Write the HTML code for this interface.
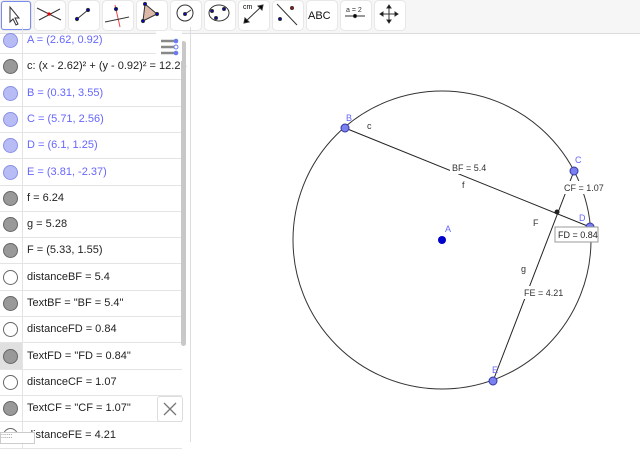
<!DOCTYPE html><html><head><style>
body{margin:0;width:640px;height:442px;overflow:hidden;background:#fff;font-family:"Liberation Sans",sans-serif;position:relative}
.tb{position:absolute;left:0;top:0;width:640px;height:33px;background:#f6f6f6;border-bottom:1px solid #ddd}
.tool{position:absolute;top:1px;width:30px;height:29px;background:#fff;border-radius:3px;box-shadow:0 0 1px #999}
.alg{position:absolute;left:0;top:27px;width:190px;height:415px;border-right:1px solid #ddd}
.row{position:absolute;left:0;width:182px;height:26px;border-bottom:1px solid #e4e4e4;font-size:11px;line-height:26px}
.row .ic{position:absolute;left:0;top:0;width:22px;height:26px;border-right:1px solid #e4e4e4}
.row .d{position:absolute;left:3px;top:6px;width:13px;height:13px;border-radius:50%;border:1px solid #666;background:#999}
.row .t{position:absolute;left:27px;white-space:nowrap;color:#222}
.blue .t{color:#66f}.blue .d{background:#b8bcf5;border-color:#8a90e8}
.w .d{background:#fff}
</style></head><body>
<div class="tb">
<div class="tool" style="left:1px;border:1px solid #7b8cf0;width:28px;height:27px"></div>
<div class="tool" style="left:35px"></div><div class="tool" style="left:69px"></div><div class="tool" style="left:103px"></div>
<div class="tool" style="left:137px"></div><div class="tool" style="left:171px"></div><div class="tool" style="left:205px"></div>
<div class="tool" style="left:239px"></div><div class="tool" style="left:273px"></div><div class="tool" style="left:307px"></div>
<div class="tool" style="left:341px"></div><div class="tool" style="left:375px"></div>
<svg width="420" height="33" style="position:absolute;left:0;top:0">
<g fill="none" stroke="#333" stroke-width="1">
<path d="M10 7 L10 22 L13 19 L16 25 L18 24 L15 18 L19 18 Z"/>
<path d="M37 8 L61 20 M39 20 L60 9"/><circle cx="49" cy="14" r="1.6" fill="#d00" stroke="none"/>
<path d="M77 19 L88 10"/><circle cx="77" cy="19" r="1.6" fill="#00c"/><circle cx="88" cy="10" r="1.6" fill="#00c"/>
<path d="M115 5 L120 27" stroke="#e44"/><path d="M105 22 L129 17"/><circle cx="116" cy="9" r="1.6" fill="#00c"/>
<path d="M145 4 L157 14 L143 21 Z" fill="#dcb8a8"/><circle cx="145" cy="4" r="1.6" fill="#00c"/><circle cx="157" cy="14" r="1.6" fill="#00c"/><circle cx="143" cy="21" r="1.6" fill="#00c"/>
<circle cx="185" cy="13" r="8"/><path d="M185 14 L191 10"/><circle cx="185" cy="14" r="1.5" fill="#00c"/>
<ellipse cx="219" cy="13" rx="10" ry="8"/><circle cx="212" cy="11" r="1.5" fill="#00c"/><circle cx="224" cy="9" r="1.5" fill="#00c"/><circle cx="216" cy="18" r="1.5" fill="#00c"/>
<path d="M244 23 L263 5"/><path d="M244 23 l5 -1 -4 -4z M263 5 l-5 1 4 4z" fill="#000"/>
<path d="M277 4 L297 25"/><circle cx="292" cy="8" r="1.5" fill="#c00"/><circle cx="280" cy="19" r="1.5" fill="#00c"/>
<path d="M345 16 L365 16"/><circle cx="355" cy="16" r="1.6" fill="#000"/>
<path d="M389 7 V21 M382 14 H396"/><path d="M389 5 l-2 3 4 0z M389 23 l-2 -3 4 0z M380 14 l3 -2 0 4z M398 14 l-3 -2 0 4z" fill="#000"/>
</g>
<text x="243" y="9" font-size="7" fill="#000">cm</text>
<text x="308" y="19" font-size="11" fill="#111">ABC</text>
<text x="346" y="12" font-size="7" fill="#333">a = 2</text>
</svg>
</div>
<div class="alg">
<div class="row blue" style="top:0"><div class="ic"></div><div class="d"></div><div class="t">A = (2.62, 0.92)</div></div>
<div class="row" style="top:26.3px"><div class="ic"></div><div class="d"></div><div class="t">c: (x - 2.62)² + (y - 0.92)² = 12.25</div></div>
<div class="row blue" style="top:52.6px"><div class="ic"></div><div class="d"></div><div class="t">B = (0.31, 3.55)</div></div>
<div class="row blue" style="top:78.9px"><div class="ic"></div><div class="d"></div><div class="t">C = (5.71, 2.56)</div></div>
<div class="row blue" style="top:105.2px"><div class="ic"></div><div class="d"></div><div class="t">D = (6.1, 1.25)</div></div>
<div class="row blue" style="top:131.5px"><div class="ic"></div><div class="d"></div><div class="t">E = (3.81, -2.37)</div></div>
<div class="row" style="top:157.8px"><div class="ic"></div><div class="d"></div><div class="t">f = 6.24</div></div>
<div class="row" style="top:184.1px"><div class="ic"></div><div class="d"></div><div class="t">g = 5.28</div></div>
<div class="row" style="top:210.4px"><div class="ic"></div><div class="d"></div><div class="t">F = (5.33, 1.55)</div></div>
<div class="row w" style="top:236.7px"><div class="ic"></div><div class="d"></div><div class="t">distanceBF = 5.4</div></div>
<div class="row" style="top:263px"><div class="ic"></div><div class="d"></div><div class="t">TextBF = "BF = 5.4"</div></div>
<div class="row w" style="top:289.3px"><div class="ic"></div><div class="d"></div><div class="t">distanceFD = 0.84</div></div>
<div class="row" style="top:315.6px"><div class="ic" style="background:#e0e0e0"></div><div class="d"></div><div class="t">TextFD = "FD = 0.84"</div></div>
<div class="row w" style="top:341.9px"><div class="ic"></div><div class="d"></div><div class="t">distanceCF = 1.07</div></div>
<div class="row" style="top:368.2px"><div class="ic"></div><div class="d"></div><div class="t">TextCF = "CF = 1.07"</div></div>
<div class="row w" style="top:394.5px"><div class="ic"></div><div class="d"></div><div class="t">distanceFE = 4.21</div></div>
<div style="position:absolute;left:0;top:405px;width:33px;height:10px;background:#fff;border:1px solid #ccc;font-size:7px;line-height:8px;color:#555">::::::</div>
<div style="position:absolute;left:181px;top:14px;width:5px;height:305px;background:#c8c8c8;border-radius:3px"></div>
<div style="position:absolute;left:156px;top:4px;width:26px;height:30px;background:#fff"></div>
<svg style="position:absolute;left:158px;top:9px" width="24" height="22"><g stroke="#888" stroke-width="2.5"><path d="M3 5H16M3 11H16M3 17H16"/></g><circle cx="18" cy="5" r="2.3" fill="#6a7af0"/><circle cx="18" cy="11" r="2" fill="#fff" stroke="#6a7af0"/><circle cx="18" cy="17" r="2.3" fill="#6a7af0"/></svg>
<div style="position:absolute;left:157px;top:369px;width:24px;height:24px;background:#fff;border:1px solid #ddd;border-radius:3px"><svg width="24" height="24"><path d="M6 6L18 18M18 6L6 18" stroke="#777" stroke-width="1.3"/></svg></div>
</div>
<svg width="640" height="442" style="position:absolute;left:0;top:0;pointer-events:none" font-family="Liberation Sans" font-size="9">
<circle cx="442" cy="240" r="149" fill="none" stroke="#333" stroke-width="1"/>
<path d="M345 128 L590 227 M574 171 L493 381" stroke="#222" stroke-width="1" fill="none"/>
<g fill="#fff"><rect x="450" y="162" width="38" height="12"/><rect x="562" y="181" width="42" height="13"/><rect x="522" y="286" width="44" height="13"/></g>
<circle cx="442" cy="240" r="4" fill="#0000cc"/>
<circle cx="345" cy="128" r="4" fill="#7b80f0" stroke="#3338a0"/>
<circle cx="574" cy="171" r="4" fill="#7b80f0" stroke="#3338a0"/>
<circle cx="590" cy="227" r="4" fill="#7b80f0" stroke="#3338a0"/>
<circle cx="493" cy="381" r="4" fill="#7b80f0" stroke="#3338a0"/>
<circle cx="557" cy="212" r="2.5" fill="#222"/>
<g fill="#66f"><text x="445" y="232">A</text><text x="346" y="121">B</text><text x="575" y="163">C</text><text x="579" y="221">D</text><text x="492" y="373">E</text></g>
<g fill="#333"><text x="367" y="129">c</text><text x="452" y="171">BF = 5.4</text><text x="462" y="188">f</text><text x="564" y="191">CF = 1.07</text><text x="533" y="226">F</text><text x="521" y="272">g</text><text x="524" y="296">FE = 4.21</text></g>
<rect x="555" y="227" width="43" height="15" fill="#fff" stroke="#999"/>
<text x="558" y="238" fill="#222">FD = 0.84</text>
</svg>
</body></html>
